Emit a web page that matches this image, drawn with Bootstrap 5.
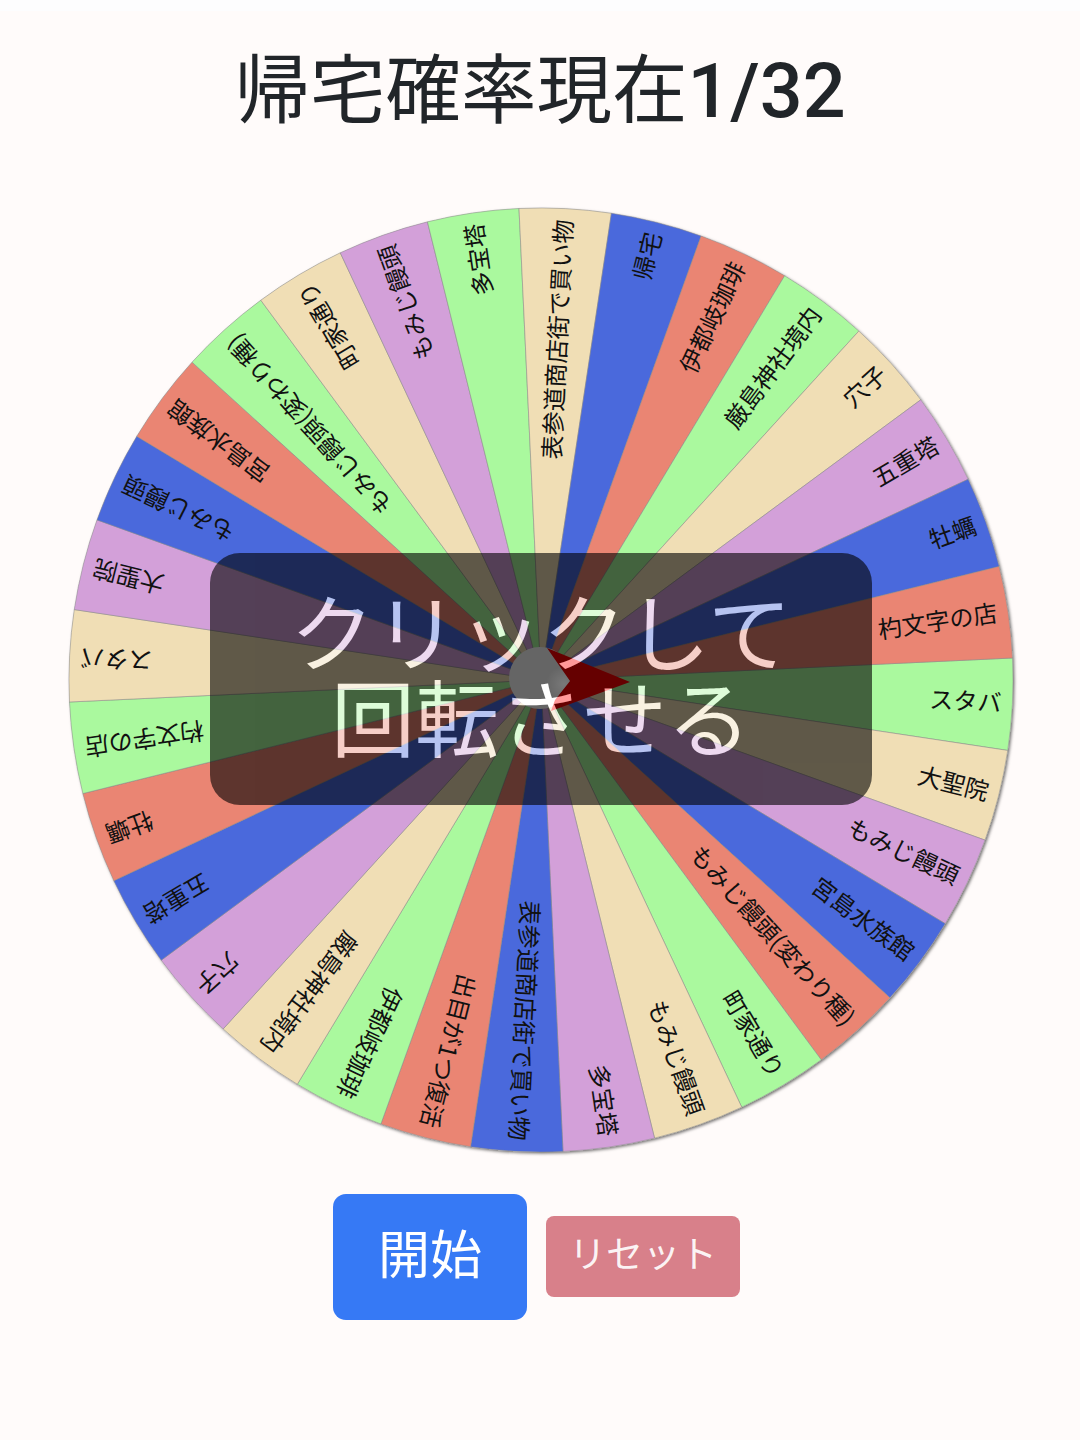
<!DOCTYPE html>
<html lang="ja">
<head>
<meta charset="utf-8">
<title>帰宅確率</title>
<link href="https://cdn.jsdelivr.net/npm/bootstrap@5.3.0/dist/css/bootstrap.min.css" rel="stylesheet">
<style>
html, body { background: #fffbfa; }
body { font-family: Roboto, "Noto Sans CJK JP", sans-serif; color: #212529; }
.top-strip { height: 11px; background: #fdfdfe; }
.page-title { font-size: 75.5px; line-height: 90px; font-weight: 400; margin: 0; padding-top: 35px; padding-bottom: 64px; text-align: center; }
.title-num { font-weight: 500; }
.wheel-stage { position: relative; width: 960px; height: 960px; margin-left: 61px; }
.wheel-svg { display: block; width: 960px; height: 960px; overflow: visible; }
.wheel-svg text { font-family: "Noto Sans CJK JP", sans-serif; font-size: 24px; fill: #111; }
.spin-overlay { position: absolute; left: 149px; top: 353px; width: 662px; height: 252px; padding-top: 2px; border-radius: 30px; background: #000; opacity: .6; color: #fff; font-size: 84px; line-height: 86px; display: flex; flex-direction: column; align-items: center; justify-content: center; }
.hub-glint { position: absolute; left: 469px; top: 448px; width: 50px; height: 70px; pointer-events: none; }
.wheel-actions { margin-top: 34px; padding-left: 333px; gap: 19px; }
.btn-start, .btn-reset { width: 194px; border: 0; display: flex; align-items: center; justify-content: center; padding: 0; }
.btn-start { height: 126px; background: #3679f5; color: #fff; font-size: 52px; border-radius: 13px; }
.btn-reset { height: 81px; margin-bottom: 2px; background: #d8808a; color: rgba(255,255,255,.92); font-size: 37px; border-radius: 8px; }
.btn-start:hover { background: #3679f5; color: #fff; }
.btn-reset:hover { background: #d8808a; color: #fff; }
</style>
</head>
<body>
<div class="top-strip"></div>
<h1 class="page-title">帰宅確率現在<span class="title-num">1/32</span></h1>
<div class="wheel-stage">
  <svg class="wheel-svg" id="wheel" viewBox="0 0 960 960" xmlns="http://www.w3.org/2000/svg">
    <defs>
      <filter id="rimShadow" x="-5%" y="-5%" width="110%" height="110%"><feDropShadow dx="1.5" dy="1.5" stdDeviation="1.5" flood-color="#000" flood-opacity=".55"/></filter>
    </defs>
    <circle cx="480" cy="480" r="472" fill="#ccc" filter="url(#rimShadow)"/>
    <g id="slices"></g>
    <circle cx="479" cy="478" r="31" fill="#fff"/>
    <polygon points="486,448 569,482 490,511 494,500 509,481" fill="#f00"/>
  </svg>
  <div class="spin-overlay"><div>クリックして</div><div>回転させる</div></div>
  <svg class="hub-glint" viewBox="0 0 50 70" xmlns="http://www.w3.org/2000/svg" aria-hidden="true">
    <defs>
      <radialGradient id="glint" gradientUnits="userSpaceOnUse" cx="34" cy="36" r="18"><stop offset="0" stop-color="#fff" stop-opacity=".13"/><stop offset="1" stop-color="#fff" stop-opacity="0"/></radialGradient>
    </defs>
    <polygon points="17,0 40,33 25,52 0,52 0,0" fill="url(#glint)"/>
  </svg>
</div>
<div class="d-flex align-items-center wheel-actions">
  <button type="button" class="btn btn-start">開始</button>
  <button type="button" class="btn btn-reset">リセット</button>
</div>
<script>
var items=[["スタバ","g"],["大聖院","t"],["もみじ饅頭","p"],["宮島水族館","b"],["もみじ饅頭(変わり種)","r"],["町家通り","g"],["もみじ饅頭","t"],["多宝塔","p"],["表参道商店街で買い物","b"],["出目が1つ復活","r"],["伊都岐珈琲","g"],["厳島神社境内","t"],["穴子","p"],["五重塔","b"],["牡蠣","r"],["杓文字の店","g"],["スタバ","t"],["大聖院","p"],["もみじ饅頭","b"],["宮島水族館","r"],["もみじ饅頭(変わり種)","g"],["町家通り","t"],["もみじ饅頭","p"],["多宝塔","g"],["表参道商店街で買い物","t"],["帰宅","b"],["伊都岐珈琲","r"],["厳島神社境内","g"],["穴子","t"],["五重塔","p"],["牡蠣","b"],["杓文字の店","r"]];
var col={g:"#aaf99e",t:"#f0deb5",p:"#d3a0d9",b:"#4a69dc",r:"#ea8573"};
var g=document.getElementById("slices"),NS="http://www.w3.org/2000/svg",R=472,C=480,step=11.25,start=-2.67;
function pt(a,r){var t=a*Math.PI/180;return (C+r*Math.cos(t)).toFixed(2)+" "+(C+r*Math.sin(t)).toFixed(2);}
items.forEach(function(it,i){
  var a0=start+i*step,a1=a0+step,mid=a0+step/2;
  var p=document.createElementNS(NS,"path");
  p.setAttribute("d","M"+C+" "+C+"L"+pt(a0,R)+"A"+R+" "+R+" 0 0 1 "+pt(a1,R)+"Z");
  p.setAttribute("fill",col[it[1]]);p.setAttribute("stroke","#888");p.setAttribute("stroke-width",".5");
  g.appendChild(p);
  var t=document.createElementNS(NS,"text");
  t.textContent=it[0];t.setAttribute("text-anchor","end");t.setAttribute("x",C+461);t.setAttribute("y",C+8);
  t.setAttribute("transform","rotate("+mid+" "+C+" "+C+")");
  g.appendChild(t);
});
</script>
<script src="https://cdn.jsdelivr.net/npm/bootstrap@5.3.0/dist/js/bootstrap.bundle.min.js"></script>
</body>
</html>
